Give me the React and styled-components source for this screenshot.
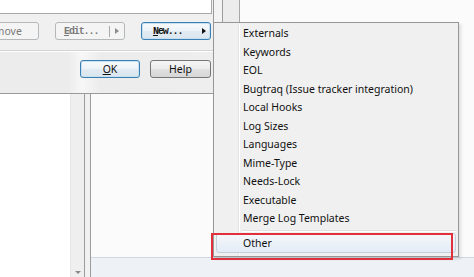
import React from "react";
import styled, { createGlobalStyle, css } from "styled-components";

const Global = createGlobalStyle`
  html, body { margin: 0; padding: 0; background: #fbfbfb; }
  body { font-family: "Noto Sans", "Liberation Sans", sans-serif; }
`;

const Page = styled.div`
  position: relative;
  width: 474px;
  height: 277px;
  overflow: hidden;
  display: flex;
  background: #fbfbfb;
  font-family: "Noto Sans", "Liberation Sans", sans-serif;
  color: #1a1a1a;
`;

const TreePane = styled.div`
  width: 70px;
  background: #ffffff;
`;

const ScrollTrack = styled.div`
  width: 14px;
  background: #efefef;
  border-left: 1px solid #e6e6e6;
  box-sizing: border-box;
  display: flex;
  flex-direction: column;
  justify-content: flex-end;
  align-items: center;
  padding-bottom: 3px;
`;

const Splitter = styled.div`
  width: 7px;
  box-sizing: border-box;
  border-left: 1px solid #9c9c9c;
  border-right: 1px solid #9c9c9c;
  background: #f1f1f1;
`;

const ContentPane = styled.div`
  flex: 1;
  display: flex;
  flex-direction: column;
`;

const ContentBody = styled.div`
  flex: 1;
  background: #fbfbfb;
`;

const StatusBand = styled.div`
  height: 19px;
  background: #eef2f7;
  border-top: 1px solid #cfd8e2;
`;

/* Dialog overlay */
const Dialog = styled.div`
  position: absolute;
  left: 0;
  top: 0;
  width: 214px;
  height: 94px;
  box-sizing: border-box;
  background: #f0f0f0;
  border-right: 1px solid #9a9a9a;
  border-bottom: 1px solid #9a9a9a;
  display: flex;
  flex-direction: column;
`;

const ListBox = styled.div`
  height: 13px;
  margin-right: 1px;
  background: #ffffff;
  border-right: 1px solid #a9a9a9;
  border-bottom: 1px solid #a9a9a9;
`;

const ButtonRow = styled.div`
  display: flex;
  align-items: center;
  gap: ${(p) => p.$gap}px;
  justify-content: ${(p) => (p.$end ? "flex-end" : "flex-start")};
  padding-right: ${(p) => (p.$end ? 2 : 0)}px;
  margin-top: ${(p) => p.$top}px;
`;

const Footer = styled.div`
  flex: 1;
  margin-top: 10px;
  border-top: 1px solid #d3d3d3;
  box-shadow: inset 0 1px 0 #ffffff;
  background: linear-gradient(90deg, #ececec 0px, #ececec 68px, #f7f7f7 82px, #ececec 100px, #eeeeee 100%);
  display: flex;
  flex-direction: column;
`;

const variants = {
  disabled: css`
    border-color: #b4b8bb;
    background: #f4f4f4;
    color: #7a7a7a;
  `,
  normal: css`
    border-color: #777777;
    background: linear-gradient(#f5f5f5 0%, #ececec 50%, #e0e0e0 52%, #d6d6d6 100%);
    color: #111;
  `,
  focus: css`
    border-color: #3c7fb1;
    background: linear-gradient(#f7fafc 0%, #eef3f7 50%, #e2ebf2 52%, #dbe5ed 100%);
    box-shadow: inset 0 0 0 1px #c5e1f3;
    color: #111;
  `,
};

const Button = styled.div`
  box-sizing: border-box;
  height: 18px;
  width: ${(p) => p.$w}px;
  margin-left: ${(p) => p.$ml || 0}px;
  border: 1px solid;
  border-radius: 3px;
  display: flex;
  align-items: center;
  justify-content: center;
  font-size: 10.5px;
  flex-shrink: 0;
  ${(p) => variants[p.$v]}
`;

const SplitButton = styled(Button)`
  justify-content: flex-start;
  padding-left: ${(p) => p.$pl}px;
`;

const MonoLabel = styled.span`
  font-family: "Liberation Mono", "DejaVu Sans Mono", monospace;
  font-size: 10px;
  letter-spacing: -1.1px;
  font-weight: 600;
  flex: 1;
`;

const Mn = styled.span`
  text-decoration: underline;
  text-underline-offset: 1px;
`;

const SplitSep = styled.span`
  width: 1px;
  height: 11px;
  background: #a9a9a9;
  margin-right: 5px;
`;

const Arrow = styled.span`
  width: 0;
  height: 0;
  border-top: 3px solid transparent;
  border-bottom: 3px solid transparent;
  border-left: 4px solid ${(p) => p.$c};
  margin-right: ${(p) => p.$mr}px;
`;

const DownArrow = styled.span`
  width: 0;
  height: 0;
  border-left: 3px solid transparent;
  border-right: 3px solid transparent;
  border-top: 3px solid #8a8a8a;
`;

const BehindEdge = styled.div`
  position: absolute;
  left: 213px;
  top: 0;
  width: 27px;
  height: 22px;
  box-sizing: border-box;
  display: flex;
`;

const EdgeFrame = styled.div`
  width: 9px;
  background: #f3f3f3;
`;

const EdgeStrip = styled.div`
  flex: 1;
  background: #ececec;
  border-left: 1px solid #9c9c9c;
  border-right: 1px solid #a8a8a8;
`;

/* Popup menu */
const Menu = styled.div`
  position: absolute;
  left: 213px;
  top: 22px;
  width: 246px;
  height: 235px;
  box-sizing: border-box;
  background: #f0f0f0;
  border: 1px solid #979797;
  padding: 1px 2px 2px 2px;
  display: flex;
  flex-direction: column;
  box-shadow: 2px 2px 3px rgba(0, 0, 0, 0.12);
  &::before {
    content: "";
    position: absolute;
    left: 24px;
    top: 1px;
    bottom: 1px;
    width: 1px;
    background: #e2e3e3;
    box-shadow: 1px 0 0 #ffffff;
  }
`;

const MenuItem = styled.div`
  position: relative;
  height: ${(p) => (p.$hot ? 20 : 18.5)}px;
  flex-shrink: 0;
  box-sizing: border-box;
  display: flex;
  align-items: center;
  padding-left: 26px;
  font-size: 10.5px;
  color: #111;
  border-radius: 3px;
  border: 1px solid transparent;
  ${(p) =>
    p.$hot &&
    css`
      border-color: #c3cfdd;
      background: linear-gradient(#f5f8fc, #e3ebf5);
      z-index: 1;
    `}
`;

const MenuSeparator = styled.div`
  height: 5.5px;
  flex-shrink: 0;
  display: flex;
  align-items: center;
  padding-left: 26px;
  &::after {
    content: "";
    flex: 1;
    height: 1px;
    background: #e0e0e0;
    box-shadow: 0 1px 0 #ffffff;
  }
`;

const Annotation = styled.div`
  position: absolute;
  left: 211px;
  top: 233px;
  width: 242px;
  height: 27px;
  box-sizing: border-box;
  border: 2px solid #e1303c;
  z-index: 5;
`;

const items = [
  "Externals",
  "Keywords",
  "EOL",
  "Bugtraq (Issue tracker integration)",
  "Local Hooks",
  "Log Sizes",
  "Languages",
  "Mime-Type",
  "Needs-Lock",
  "Executable",
  "Merge Log Templates",
];

export default function App() {
  return (
    <>
      <Global />
      <Page>
        <TreePane />
        <ScrollTrack>
          <DownArrow />
        </ScrollTrack>
        <Splitter />
        <ContentPane>
          <ContentBody />
          <StatusBand />
        </ContentPane>

        <BehindEdge>
          <EdgeFrame />
          <EdgeStrip />
        </BehindEdge>

        <Dialog>
          <ListBox />
          <ButtonRow $top={8} $gap={0}>
            <Button $v="disabled" $w={74} $ml={-35}>Remove</Button>
            <SplitButton $v="disabled" $w={70} $ml={16} $pl={8}>
              <MonoLabel><Mn>E</Mn>dit...</MonoLabel>
              <SplitSep />
              <Arrow $c="#8c8c8c" $mr={5} />
            </SplitButton>
            <SplitButton $v="focus" $w={70} $ml={16} $pl={11}>
              <MonoLabel><Mn>N</Mn>ew...</MonoLabel>
              <Arrow $c="#111" $mr={4} />
            </SplitButton>
          </ButtonRow>
          <Footer>
            <ButtonRow $top={9} $gap={10} $end>
              <Button $v="focus" $w={60}><Mn>O</Mn>K</Button>
              <Button $v="normal" $w={61}>Help</Button>
            </ButtonRow>
          </Footer>
        </Dialog>

        <Menu>
          {items.map((t) => (
            <MenuItem key={t}>{t}</MenuItem>
          ))}
          <MenuSeparator />
          <MenuItem $hot>Other</MenuItem>
        </Menu>

        <Annotation />
      </Page>
    </>
  );
}
